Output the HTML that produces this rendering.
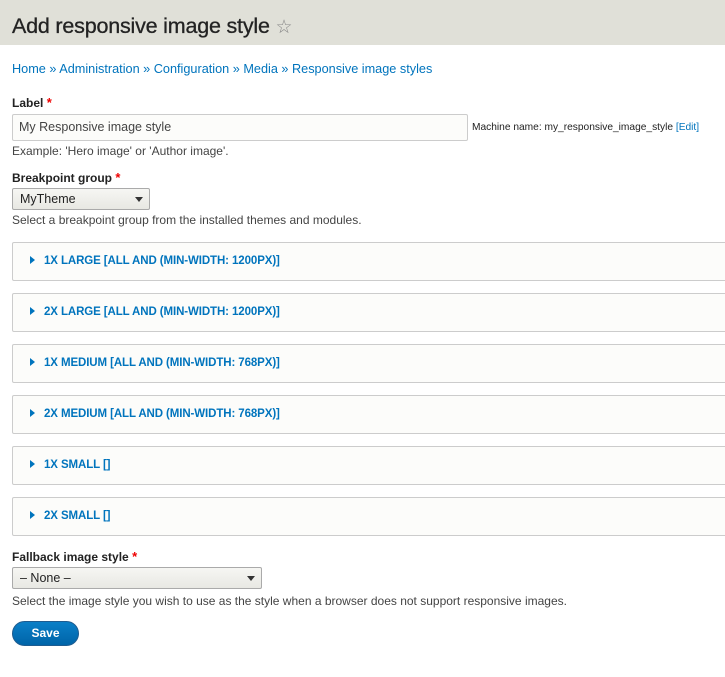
<!DOCTYPE html>
<html><head><meta charset="utf-8"><style>
body{margin:0;width:725px;height:677px;overflow:hidden;background:#fff;font-family:"Liberation Sans",sans-serif;color:#222;position:relative}
.hdr{position:absolute;left:0;top:0;width:725px;height:45px;background:#e0e0d8}
.hdr h1{position:absolute;left:12px;top:14px;margin:0;font-size:21.5px;font-weight:normal;color:#232323;letter-spacing:-0.2px;-webkit-text-stroke:0.3px #232323}
.a{position:absolute;white-space:nowrap}
.bc{left:12px;top:62px;font-size:12.7px;color:#0074bd}
.lbl{font-size:12px;font-weight:bold;color:#222}
.req{color:#e00;font-size:13px}
.desc{font-size:12px;color:#444}
.inp{position:absolute;left:12px;top:114px;height:25px;border:1px solid #ccc;border-radius:2px;background:#fcfcfa;font-size:12.5px;color:#444;line-height:25px;padding-left:6px;box-sizing:content-box;width:448px}
.sel{position:absolute;border:1px solid #aaa;border-radius:2px;background:linear-gradient(#f6f6f3,#e8e8e3);font-size:12.5px;line-height:20px;padding-left:7px;box-sizing:border-box;color:#222}
.sel:after{content:"";position:absolute;right:6px;top:8px;border-left:4px solid transparent;border-right:4px solid transparent;border-top:5px solid #333}
.det{position:absolute;left:12px;width:720px;height:39px;border:1px solid #ccc;border-radius:2px;background:#fcfcfa;box-sizing:border-box}
.det span{position:absolute;left:17px;top:12px;font-size:11.5px;font-weight:bold;color:#0074bd;letter-spacing:-0.1px}
.det span:before{content:"";display:inline-block;border-top:4px solid transparent;border-bottom:4px solid transparent;border-left:5px solid #0074bd;margin-right:9px;vertical-align:0}
.btn{position:absolute;left:12px;top:621px;width:67px;height:25px;border-radius:13px;background:linear-gradient(#0a7fc7,#0064a8);border:1px solid #1e5c90;box-sizing:border-box;color:#fff;font-weight:bold;font-size:12px;text-align:center;line-height:23px}
</style></head><body>
<div class="hdr"><h1>Add responsive image style <span style="color:#888;font-size:19px;-webkit-text-stroke:0">☆</span></h1></div>
<div class="a bc">Home » Administration » Configuration » Media » Responsive image styles</div>
<div class="a lbl" style="left:12px;top:95px">Label <span class="req">*</span></div>
<div class="inp">My Responsive image style</div>
<div class="a" style="left:472px;top:122px;font-size:10.2px;color:#222">Machine name: my_responsive_image_style <span style="color:#0074bd">[Edit]</span></div>
<div class="a desc" style="left:12px;top:144px">Example: 'Hero image' or 'Author image'.</div>
<div class="a lbl" style="left:12px;top:170px">Breakpoint group <span class="req">*</span></div>
<div class="sel" style="left:12px;top:188px;width:138px;height:22px">MyTheme</div>
<div class="a desc" style="left:12px;top:213px">Select a breakpoint group from the installed themes and modules.</div>
<div class="det" style="top:242px"><span>1X LARGE [ALL AND (MIN-WIDTH: 1200PX)]</span></div>
<div class="det" style="top:293px"><span>2X LARGE [ALL AND (MIN-WIDTH: 1200PX)]</span></div>
<div class="det" style="top:344px"><span>1X MEDIUM [ALL AND (MIN-WIDTH: 768PX)]</span></div>
<div class="det" style="top:395px"><span>2X MEDIUM [ALL AND (MIN-WIDTH: 768PX)]</span></div>
<div class="det" style="top:446px"><span>1X SMALL []</span></div>
<div class="det" style="top:497px"><span>2X SMALL []</span></div>
<div class="a lbl" style="left:12px;top:549px">Fallback image style <span class="req">*</span></div>
<div class="sel" style="left:12px;top:567px;width:250px;height:22px">– None –</div>
<div class="a desc" style="left:12px;top:594px">Select the image style you wish to use as the style when a browser does not support responsive images.</div>
<div class="btn">Save</div>
</body></html>
